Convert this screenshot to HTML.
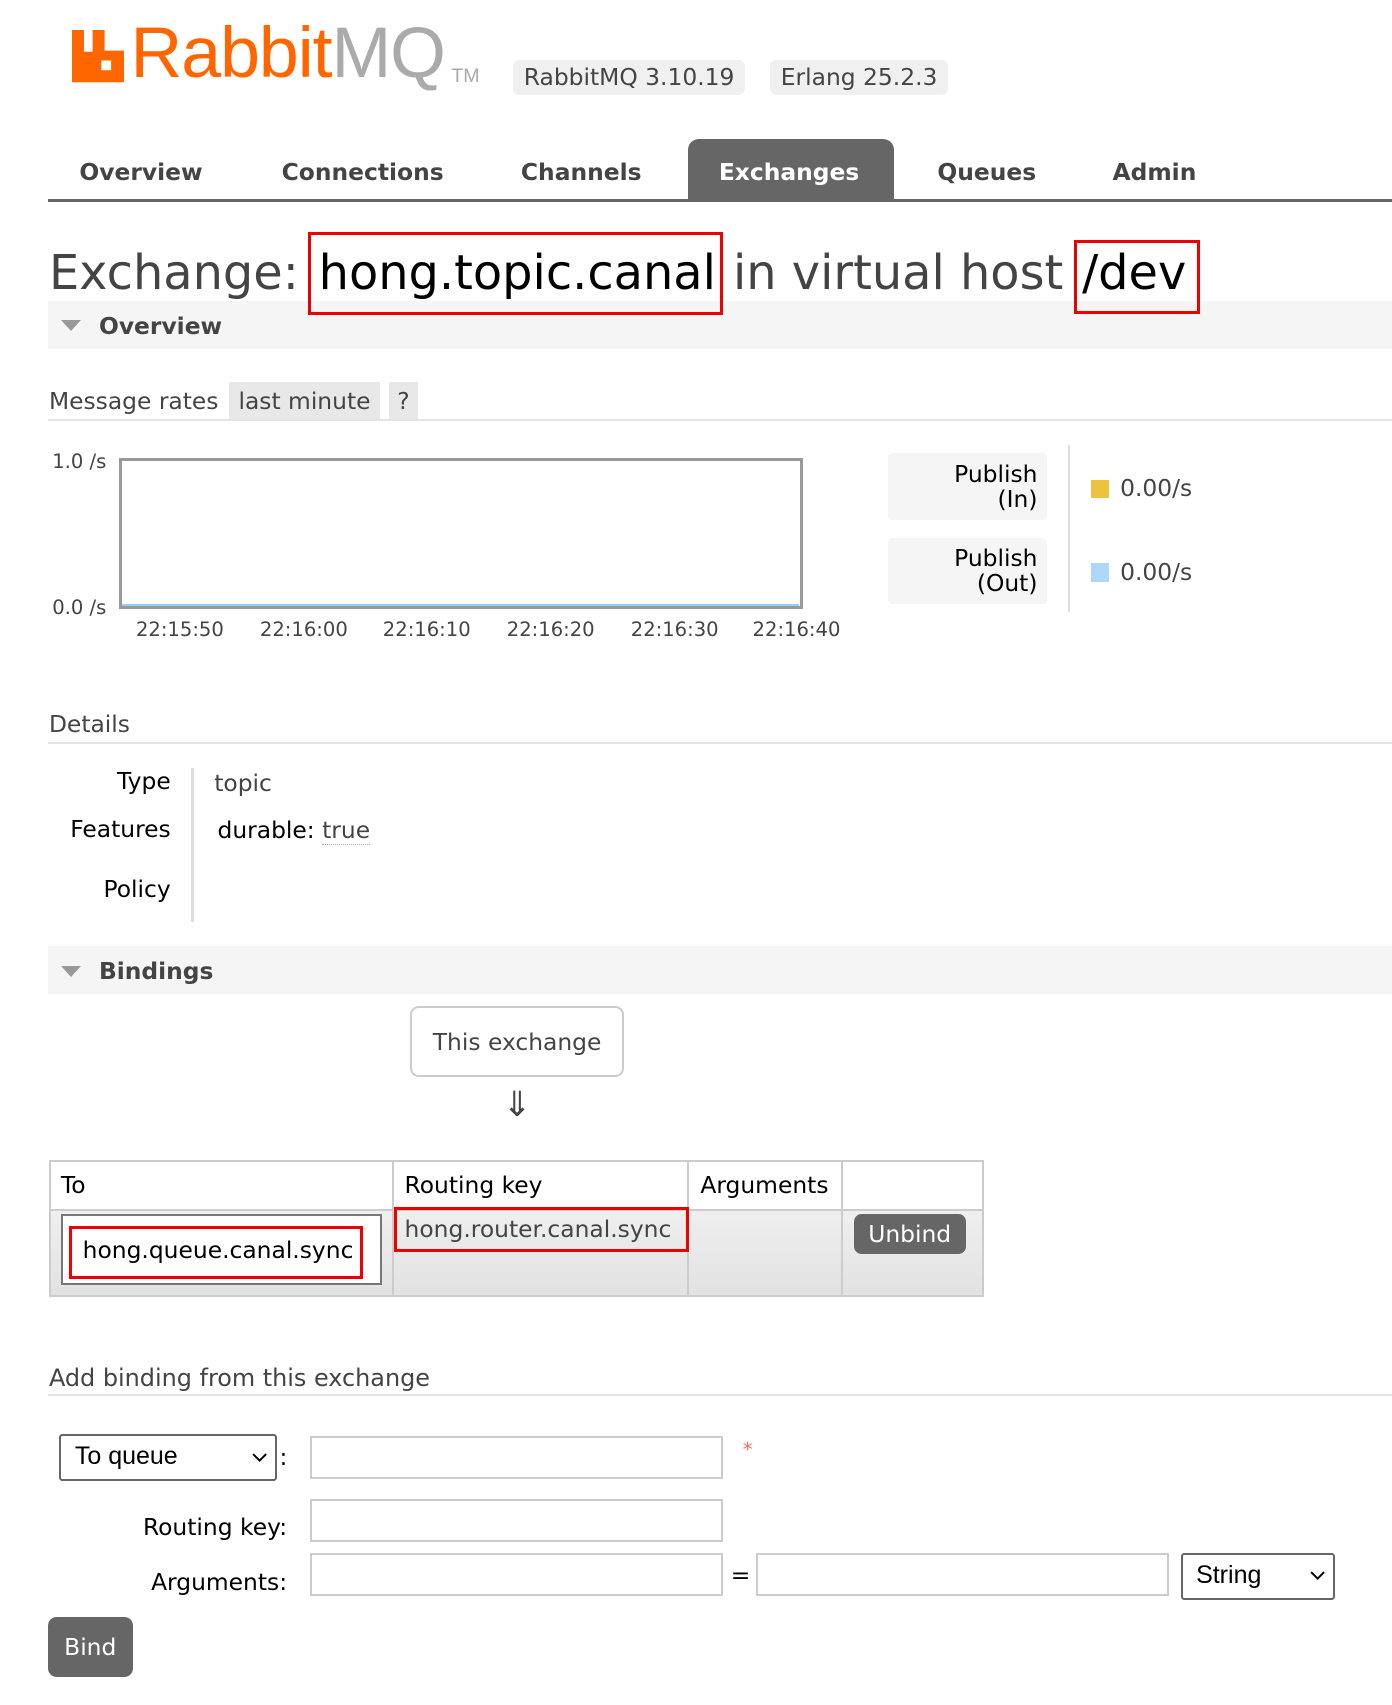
<!DOCTYPE html>
<html><head><meta charset="utf-8"><style>
html,body{margin:0;padding:0;background:#fff;overflow:hidden}
#w{position:relative;width:1280px;height:1568px;zoom:1.0875;font-family:"DejaVu Sans","Liberation Sans",sans-serif;color:#444}
.a{position:absolute;white-space:nowrap}
.nav{font-weight:bold;font-size:21.5px;top:145px;color:#444}
.hdr{position:absolute;left:44px;width:1236px;background:#f5f5f5}
.in{position:absolute;border:2px solid #ccc;background:#fff;box-sizing:border-box}
.red{position:absolute;border:3px solid #e00;box-sizing:border-box}
.t{font-size:21.5px}
.h{position:absolute;top:226px;font-size:44px;white-space:nowrap}
</style></head><body><div id="w">
<!-- logo -->
<svg class="a" style="left:66px;top:28px" width="48" height="48" viewBox="0 0 48 48"><path d="M0 0h11v20h8V0h11v19h18v29H0z" fill="#f60"/><rect x="27" y="28" width="9" height="9" fill="#fff"/></svg>
<div class="a" style="left:120px;top:11px;font-family:'Liberation Sans',sans-serif;font-size:66px;letter-spacing:-1px"><span style="color:#f60">Rabbit</span><span style="color:#aaa">MQ</span></div>
<div class="a" style="left:415px;top:60px;font-family:'Liberation Sans',sans-serif;font-size:18px;color:#aaa">TM</div>
<div class="a t" style="left:472px;top:55px;width:213px;height:32px;background:#f0f0f0;border-radius:6px;line-height:33px;text-align:center">RabbitMQ 3.10.19</div>
<div class="a t" style="left:708px;top:55px;width:164px;height:32px;background:#f0f0f0;border-radius:6px;line-height:33px;text-align:center">Erlang 25.2.3</div>
<!-- nav -->
<div class="a" style="left:633px;top:128px;width:189px;height:58px;background:#666;border-radius:10px 10px 0 0"></div>
<div class="a nav" style="left:73px">Overview</div>
<div class="a nav" style="left:259px">Connections</div>
<div class="a nav" style="left:479px">Channels</div>
<div class="a nav" style="left:661px;color:#fff">Exchanges</div>
<div class="a nav" style="left:862px">Queues</div>
<div class="a nav" style="left:1023px">Admin</div>
<div class="a" style="left:44px;top:183px;width:1236px;height:3px;background:#666"></div>
<!-- title -->
<div class="hdr" style="top:277px;height:44px"></div>
<div class="h" style="left:45px">Exchange:</div>
<div class="h" style="left:293px;color:#000">hong.topic.canal</div>
<div class="h" style="left:674px">in virtual host</div>
<div class="h" style="left:995px;color:#000">/dev</div>
<div class="red" style="left:283px;top:213px;width:382px;height:77px"></div>
<div class="red" style="left:988px;top:221px;width:115px;height:68px"></div>
<div class="a" style="left:56px;top:294px;width:0;height:0;border-left:10px solid transparent;border-right:10px solid transparent;border-top:11px solid #999"></div>
<div class="a" style="left:91px;top:287px;font-size:21.5px;font-weight:bold">Overview</div>
<!-- message rates -->
<div class="a t" style="left:45px;top:356px">Message rates</div>
<div class="a t" style="left:211px;top:351px;width:138px;height:35px;background:#e8e8e8;line-height:36px;text-align:center">last minute</div>
<div class="a t" style="left:358px;top:351px;width:26px;height:35px;background:#e8e8e8;line-height:36px;text-align:center">?</div>
<div class="a" style="left:44px;top:385px;width:1236px;height:2px;background:#e4e4e4"></div>
<div class="a" style="left:48px;top:414px;font-size:18px">1.0 /s</div>
<div class="a" style="left:48px;top:548px;font-size:18px">0.0 /s</div>
<div class="a" style="left:109px;top:421px;width:629px;height:139px;border:3px solid #999;box-sizing:border-box"></div>
<div class="a" style="left:112px;top:555px;width:623px;height:2px;background:#9cf"></div>
<div class="a" style="left:125px;top:568px;font-size:18px"><span style="position:absolute;left:0">22:15:50</span><span style="position:absolute;left:114px">22:16:00</span><span style="position:absolute;left:227px">22:16:10</span><span style="position:absolute;left:341px">22:16:20</span><span style="position:absolute;left:455px">22:16:30</span><span style="position:absolute;left:567px">22:16:40</span></div>
<div class="a" style="left:817px;top:417px;width:146px;height:61px;background:#f5f5f5;border-radius:4px;font-size:21.5px;line-height:23px;text-align:right;box-sizing:border-box;padding:8px 9px 0 0;color:#000">Publish<br>(In)</div>
<div class="a" style="left:817px;top:495px;width:146px;height:60px;background:#f5f5f5;border-radius:4px;font-size:21.5px;line-height:23px;text-align:right;box-sizing:border-box;padding:7px 9px 0 0;color:#000">Publish<br>(Out)</div>
<div class="a" style="left:982px;top:409px;width:2px;height:154px;background:#ddd"></div>
<div class="a" style="left:1003px;top:441px;width:17px;height:17px;background:#edc240"></div>
<div class="a t" style="left:1030px;top:436px">0.00/s</div>
<div class="a" style="left:1003px;top:518px;width:17px;height:17px;background:#afd8f8"></div>
<div class="a t" style="left:1030px;top:513px">0.00/s</div>
<!-- details -->
<div class="a t" style="left:45px;top:653px">Details</div>
<div class="a" style="left:44px;top:682px;width:1236px;height:2px;background:#e4e4e4"></div>
<div class="a t" style="left:0;width:157px;top:705px;text-align:right;color:#000">Type</div>
<div class="a t" style="left:0;width:157px;top:749px;text-align:right;color:#000">Features</div>
<div class="a t" style="left:0;width:157px;top:805px;text-align:right;color:#000">Policy</div>
<div class="a" style="left:176px;top:706px;width:2px;height:142px;background:#ddd"></div>
<div class="a t" style="left:197px;top:707px">topic</div>
<div class="a t" style="left:200px;top:750px;color:#000">durable: <span style="color:#444;border-bottom:1px dotted #aaa">true</span></div>
<!-- bindings -->
<div class="hdr" style="top:870px;height:44px"></div>
<div class="a" style="left:56px;top:888px;width:0;height:0;border-left:10px solid transparent;border-right:10px solid transparent;border-top:11px solid #999"></div>
<div class="a" style="left:91px;top:880px;font-size:21.5px;font-weight:bold">Bindings</div>
<div class="a t" style="left:377px;top:925px;width:197px;height:65px;border:2px solid #ccc;border-radius:8px;box-sizing:border-box;line-height:64px;text-align:center">This exchange</div>
<div class="a" style="left:462px;top:998px;font-size:32px;color:#444">⇓</div>
<div class="a" style="left:45px;top:1067px;width:860px;height:126px;border:2px solid #ccc;box-sizing:border-box;background:linear-gradient(#fff 0,#fff 43px,#ccc 43px,#ccc 45px,#efefef 45px,#e2e2e2 100%)"></div>
<div class="a" style="left:360px;top:1067px;width:2px;height:126px;background:#ccc"></div>
<div class="a" style="left:632px;top:1067px;width:2px;height:126px;background:#ccc"></div>
<div class="a" style="left:773px;top:1067px;width:2px;height:126px;background:#ccc"></div>
<div class="a t" style="left:56px;top:1077px;color:#000">To</div>
<div class="a t" style="left:372px;top:1077px;color:#000">Routing key</div>
<div class="a t" style="left:644px;top:1077px;color:#000">Arguments</div>
<div class="a" style="left:56px;top:1116px;width:295px;height:66px;background:#fff;border:2px solid #777;box-sizing:border-box"></div>
<div class="a t" style="left:76px;top:1137px;color:#000">hong.queue.canal.sync</div>
<div class="a" style="left:333px;top:1118px;width:16px;height:62px;background:#fff"></div>
<div class="red" style="left:63px;top:1127px;width:271px;height:49px"></div>
<div class="a t" style="left:372px;top:1117px">hong.router.canal.sync</div>
<div class="red" style="left:362px;top:1110px;width:272px;height:41px"></div>
<div class="a t" style="left:785px;top:1116px;width:103px;height:37px;background:#666;border-radius:7px;color:#fff;line-height:38px;text-align:center">Unbind</div>
<!-- add binding -->
<div class="a" style="left:45px;top:1254px;font-size:22px">Add binding from this exchange</div>
<div class="a" style="left:44px;top:1282px;width:1236px;height:2px;background:#e4e4e4"></div>
<div class="a" style="left:54px;top:1319px;width:201px;height:43px;border:2px solid #666;border-radius:3px;box-sizing:border-box;font-family:'Liberation Sans',sans-serif;font-size:23px;line-height:38px;padding-left:13px;color:#000">To queue<svg style="position:absolute;right:7px;top:15px" width="14" height="9" viewBox="0 0 14 9"><path d="M1 1l6 6 6-6" fill="none" stroke="#000" stroke-width="1.8"/></svg></div>
<div class="a t" style="left:257px;top:1327px;color:#000">:</div>
<div class="in" style="left:285px;top:1320px;width:380px;height:40px"></div>
<div class="a" style="left:683px;top:1322px;font-size:18px;color:#f66">*</div>
<div class="a t" style="left:0;width:264px;top:1391px;text-align:right;color:#000">Routing key:</div>
<div class="in" style="left:285px;top:1378px;width:380px;height:40px"></div>
<div class="a t" style="left:0;width:264px;top:1442px;text-align:right;color:#000">Arguments:</div>
<div class="in" style="left:285px;top:1428px;width:380px;height:40px"></div>
<div class="a t" style="left:672px;top:1435px;color:#000">=</div>
<div class="in" style="left:695px;top:1428px;width:380px;height:40px"></div>
<div class="a" style="left:1086px;top:1428px;width:142px;height:43px;border:2px solid #666;border-radius:3px;box-sizing:border-box;font-family:'Liberation Sans',sans-serif;font-size:23px;line-height:38px;padding-left:12px;color:#000">String<svg style="position:absolute;right:8px;top:15px" width="14" height="9" viewBox="0 0 14 9"><path d="M1 1l6 6 6-6" fill="none" stroke="#000" stroke-width="1.8"/></svg></div>
<div class="a t" style="left:44px;top:1487px;width:78px;height:55px;background:#666;border-radius:8px;color:#fff;line-height:56px;text-align:center">Bind</div>
</div></body></html>
